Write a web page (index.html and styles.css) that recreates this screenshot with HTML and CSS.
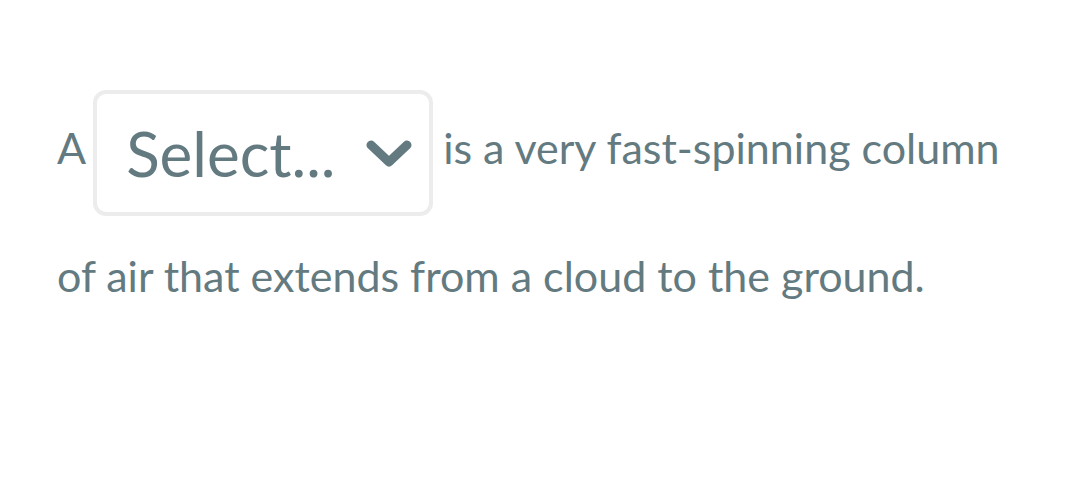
FILE: index.html
```html
<!DOCTYPE html>
<html lang="en">
<head>
    <meta charset="UTF-8">
    <title>Fill in the blank</title>
    <link rel="stylesheet" href="styles.css">
</head>
<body>
    <main class="question">
        <p class="sentence"><span>A</span><span class="select">
                <span class="select-label">Select...</span>
                <svg class="chevron" viewBox="0 0 46 30" width="46" height="30">
                    <path d="M5 7 L23 24 L41 7" fill="none" stroke="currentColor" stroke-width="9" stroke-linecap="round" stroke-linejoin="round"/>
                </svg>
            </span><span>is a very fast-spinning column</span> <span>of air that extends from a cloud to the ground.</span></p>
    </main>
</body>
</html>
```

FILE: styles.css
```css
body {
    margin: 0;
    background-color: #fff;
    font-family: Lato, "Open Sans", sans-serif;
    color: #637a80;
}
.question {
    padding: 88px 57px 0 57px;
}
.sentence {
    margin: 0;
    max-width: 966px;
    font-size: 43px;
    line-height: 120px;
}
.select {
    display: inline-flex;
    align-items: center;
    box-sizing: border-box;
    width: 340px;
    height: 126px;
    margin: 0 10px 0 7px;
    padding: 0 17px 0 29px;
    border: 4px solid #ececec;
    border-radius: 13px;
    vertical-align: middle;
    font-size: 62px;
    line-height: 1;
}
.select-label {
    flex-grow: 1;
}
.chevron {
    display: block;
}
```
